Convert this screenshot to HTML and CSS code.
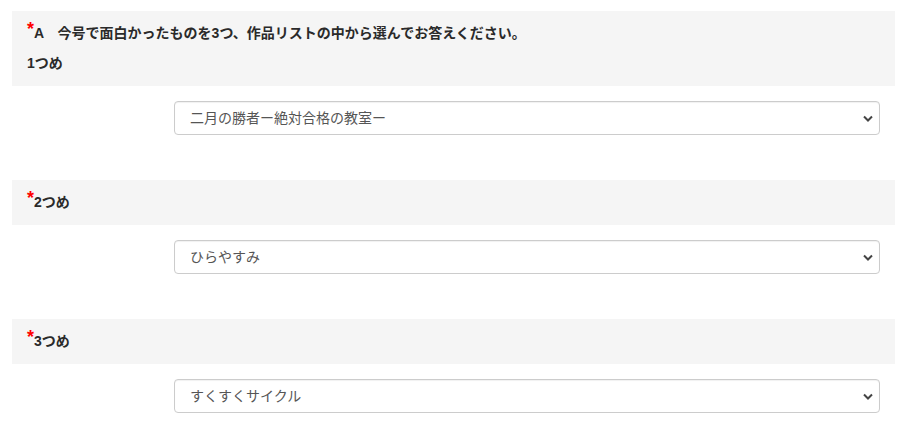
FILE: index.html
```html
<!DOCTYPE html>
<html lang="ja">
<head>
<meta charset="utf-8">
<link rel="stylesheet" href="styles.css">
</head>
<body>
<div class="form">
  <div class="q">
    <div class="q-head">
      <div class="q-title"><span class="req">*</span>A　今号で面白かったものを3つ、作品リストの中から選んでお答えください。</div>
      <div class="q-sub">1つめ</div>
    </div>
    <div class="q-body">
      <select class="sel"><option>二月の勝者ー絶対合格の教室ー</option></select>
    </div>
  </div>
  <div class="q">
    <div class="q-head">
      <div class="q-title"><span class="req">*</span>2つめ</div>
    </div>
    <div class="q-body">
      <select class="sel"><option>ひらやすみ</option></select>
    </div>
  </div>
  <div class="q">
    <div class="q-head">
      <div class="q-title"><span class="req">*</span>3つめ</div>
    </div>
    <div class="q-body">
      <select class="sel"><option>すくすくサイクル</option></select>
    </div>
  </div>
</div>
</body>
</html>
```

FILE: styles.css
```css
html, body {
  margin: 0;
  padding: 0;
  background: #fff;
}
body {
  font-family: "Liberation Sans", "Noto Sans CJK JP", sans-serif;
  color: #333;
}
.form {
  padding: 11px 15px 0 12px;
}
.q {
  margin-bottom: 45px;
}
.q-head {
  background: #f5f5f5;
  padding: 12px 15px 13px;
  font-size: 14px;
  font-weight: bold;
  line-height: 20px;
  color: #2a2a2a;
}
.q-title, .q-sub {
  height: 20px;
  white-space: nowrap;
}
.q-sub {
  margin-top: 10px;
}
.req {
  color: #f00;
  font-size: 18px;
  line-height: 0;
  position: relative;
  top: -3px;
  font-weight: bold;
}
.q-body {
  padding: 15px 15px 0 162px;
}
.sel {
  display: block;
  width: 100%;
  height: 34px;
  box-sizing: border-box;
  appearance: none;
  -webkit-appearance: none;
  border: 1px solid #ccc;
  border-radius: 4px;
  background: #fff url("data:image/svg+xml,%3Csvg xmlns='http://www.w3.org/2000/svg' width='10' height='7' viewBox='0 0 10 7'%3E%3Cpath d='M1 1.5l4 4 4-4' fill='none' stroke='%23444' stroke-width='2'/%3E%3C/svg%3E") no-repeat right 6px center;
  padding: 0 30px 0 15px;
  font-family: "Liberation Sans", "Noto Sans CJK JP", sans-serif;
  font-size: 14px;
  color: #555;
  box-shadow: inset 0 1px 1px rgba(0,0,0,0.06);
}
```
